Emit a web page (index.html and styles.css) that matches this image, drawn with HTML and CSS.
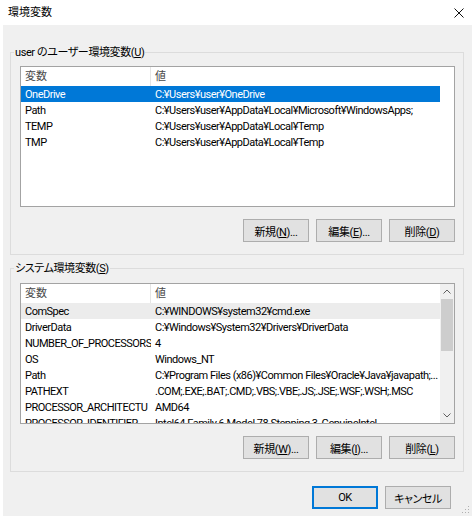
FILE: index.html
```html
<!DOCTYPE html>
<html lang="ja">
<head>
    <meta charset="UTF-8">
    <title>環境変数</title>
    <link rel="stylesheet" href="styles.css">
</head>
<body>
    <div class="window">
        <div class="titlebar">
            <span class="title">環境変数</span>
            <svg class="close-icon" width="10" height="10" viewBox="0 0 10 10">
                <path d="M0.5 0.5 L9.5 9.5 M9.5 0.5 L0.5 9.5" stroke="#111" stroke-width="1" fill="none"/>
            </svg>
        </div>
        <div class="client">
            <fieldset class="group">
                <legend>user のユーザー環境変数(<u>U</u>)</legend>
                <div class="listview">
                    <div class="lv-content">
                        <div class="lv-head">
                            <span class="col-name">変数</span>
                            <span class="col-value">値</span>
                        </div>
                        <div class="lv-row selected">
                            <span class="col-name">OneDrive</span>
                            <span class="col-value">C:¥Users¥user¥OneDrive</span>
                        </div>
                        <div class="lv-row">
                            <span class="col-name">Path</span>
                            <span class="col-value">C:¥Users¥user¥AppData¥Local¥Microsoft¥WindowsApps;</span>
                        </div>
                        <div class="lv-row">
                            <span class="col-name">TEMP</span>
                            <span class="col-value">C:¥Users¥user¥AppData¥Local¥Temp</span>
                        </div>
                        <div class="lv-row">
                            <span class="col-name">TMP</span>
                            <span class="col-value">C:¥Users¥user¥AppData¥Local¥Temp</span>
                        </div>
                    </div>
                </div>
                <div class="button-row">
                    <button class="button">新規(<u>N</u>)...</button>
                    <button class="button">編集(<u>E</u>)...</button>
                    <button class="button">削除(<u>D</u>)</button>
                </div>
            </fieldset>

            <fieldset class="group group-system">
                <legend>システム環境変数(<u>S</u>)</legend>
                <div class="listview">
                    <div class="lv-content">
                        <div class="lv-head">
                            <span class="col-name">変数</span>
                            <span class="col-value">値</span>
                        </div>
                        <div class="lv-row current">
                            <span class="col-name">ComSpec</span>
                            <span class="col-value">C:¥WINDOWS¥system32¥cmd.exe</span>
                        </div>
                        <div class="lv-row">
                            <span class="col-name">DriverData</span>
                            <span class="col-value">C:¥Windows¥System32¥Drivers¥DriverData</span>
                        </div>
                        <div class="lv-row">
                            <span class="col-name">NUMBER_OF_PROCESSORS</span>
                            <span class="col-value">4</span>
                        </div>
                        <div class="lv-row">
                            <span class="col-name">OS</span>
                            <span class="col-value">Windows_NT</span>
                        </div>
                        <div class="lv-row">
                            <span class="col-name">Path</span>
                            <span class="col-value">C:¥Program Files (x86)¥Common Files¥Oracle¥Java¥javapath;...</span>
                        </div>
                        <div class="lv-row">
                            <span class="col-name">PATHEXT</span>
                            <span class="col-value">.COM;.EXE;.BAT;.CMD;.VBS;.VBE;.JS;.JSE;.WSF;.WSH;.MSC</span>
                        </div>
                        <div class="lv-row">
                            <span class="col-name">PROCESSOR_ARCHITECTU</span>
                            <span class="col-value">AMD64</span>
                        </div>
                        <div class="lv-row">
                            <span class="col-name">PROCESSOR_IDENTIFIER</span>
                            <span class="col-value">Intel64 Family 6 Model 78 Stepping 3, GenuineIntel</span>
                        </div>
                    </div>
                    <div class="scrollbar">
                        <div class="sb-button">
                            <svg width="8" height="5" viewBox="0 0 8 5"><path d="M0.5 4.5 L4 1 L7.5 4.5" stroke="#606060" fill="none"/></svg>
                        </div>
                        <div class="sb-thumb"></div>
                        <div class="sb-track"></div>
                        <div class="sb-button">
                            <svg width="8" height="5" viewBox="0 0 8 5"><path d="M0.5 0.5 L4 4 L7.5 0.5" stroke="#606060" fill="none"/></svg>
                        </div>
                    </div>
                </div>
                <div class="button-row">
                    <button class="button">新規(<u>W</u>)...</button>
                    <button class="button">編集(<u>I</u>)...</button>
                    <button class="button">削除(<u>L</u>)</button>
                </div>
            </fieldset>

            <div class="dialog-buttons">
                <button class="button default">OK</button>
                <button class="button">キャンセル</button>
            </div>

            <svg class="grip" width="8" height="8" viewBox="0 0 8 8">
                <rect x="6" y="0" width="1" height="1" fill="#b0b0b0"/>
                <rect x="3" y="3" width="1" height="1" fill="#b0b0b0"/>
                <rect x="6" y="3" width="1" height="1" fill="#b0b0b0"/>
                <rect x="0" y="6" width="1" height="1" fill="#b0b0b0"/>
                <rect x="3" y="6" width="1" height="1" fill="#b0b0b0"/>
                <rect x="6" y="6" width="1" height="1" fill="#b0b0b0"/>
            </svg>
        </div>
    </div>
</body>
</html>
```

FILE: styles.css
```css
html {
    box-sizing: border-box;
}
*, *::before, *::after {
    box-sizing: inherit;
}
body {
    width : 474px;
    height: 521px;
    margin: 0;
    overflow: hidden;

    background-color: #fff;
    color      : #000;
    font-family: Roboto, "Noto Sans CJK JP", sans-serif;
    font-size  : 11px;
    font-feature-settings: "palt";
}
.window {
    display       : flex;
    flex-direction: column;
    height        : 521px;
}
.titlebar {
    height : 25px;
    display: flex;
    align-items    : center;
    justify-content: space-between;
    padding: 0 10px 0 8px;
}
.title {
    font-size  : 11px;
    line-height: 23px;
}
.client {
    position: relative;
    height  : 491px;
    margin  : 0 2px 0 3px;
    padding : 19px 8px 0 7px;

    display       : flex;
    flex-direction: column;

    background-color: #f0f0f0;
}
.group {
    margin   : 0;
    min-width: 0;
    padding  : 6px 8px 12px 9px;
    border   : 1px solid #dcdcdc;
}
.group-system {
    margin-top : 5px;
    padding-top: 7px;
}
.group legend {
    height     : 16px;
    line-height: 17px;
    margin-left: -6px;
    padding    : 0 1px;
    letter-spacing: -0.4px;
}
.listview {
    height : 141px;
    display: flex;
    overflow: hidden;

    border          : 1px solid #a3a3a3;
    background-color: #fff;
}
.lv-content {
    flex    : 1;
    overflow: hidden;
    letter-spacing: -0.5px;
}
.lv-head {
    display: flex;
    height : 19px;
    line-height: 20px;
    color  : #4a4a4a;
    letter-spacing: 0;
}
.lv-head .col-name {
    border-right: 1px solid #e5e5e5;
}
.lv-row {
    display    : flex;
    width      : 419px;
    height     : 16px;
    line-height: 17px;
}
.lv-row.selected {
    color           : #fff;
    background-color: #0078d7;
}
.lv-row.current {
    background-color: #ececec;
}
.col-name {
    flex         : none;
    width        : 130px;
    padding-left : 4px;
    white-space  : nowrap;
    overflow     : hidden;
}
.col-value {
    flex        : 1;
    padding-left: 4px;
    white-space : nowrap;
    overflow    : hidden;
}
.scrollbar {
    flex    : none;
    width   : 14px;
    display : flex;
    flex-direction: column;

    background-color: #f0f0f0;
}
.sb-button {
    height : 15px;
    display: flex;
    align-items    : center;
    justify-content: center;
}
.sb-thumb {
    height: 52px;
    margin: 0 1px;

    background-color: #cdcdcd;
}
.sb-track {
    flex: 1;
}
.button-row {
    display   : flex;
    justify-content: flex-end;
    column-gap: 7px;
    margin-top: 12px;
}
.button {
    width  : 66px;
    height : 23px;
    padding: 0;

    color           : #000;
    background-color: #e1e1e1;
    border          : 1px solid #adadad;

    font-family: Roboto, "Noto Sans CJK JP", sans-serif;
    font-size  : 11px;
    font-feature-settings: "palt";
    letter-spacing: -0.4px;
}
.button.default {
    border    : 1px solid #0078d7;
    box-shadow: inset 0 0 0 1px #0078d7;
}
.dialog-buttons {
    display   : flex;
    justify-content: flex-end;
    column-gap: 7px;
    margin-top  : 14px;
    margin-right: 13px;
}
.grip {
    position: absolute;
    right   : 2px;
    bottom  : 2px;
}
```
